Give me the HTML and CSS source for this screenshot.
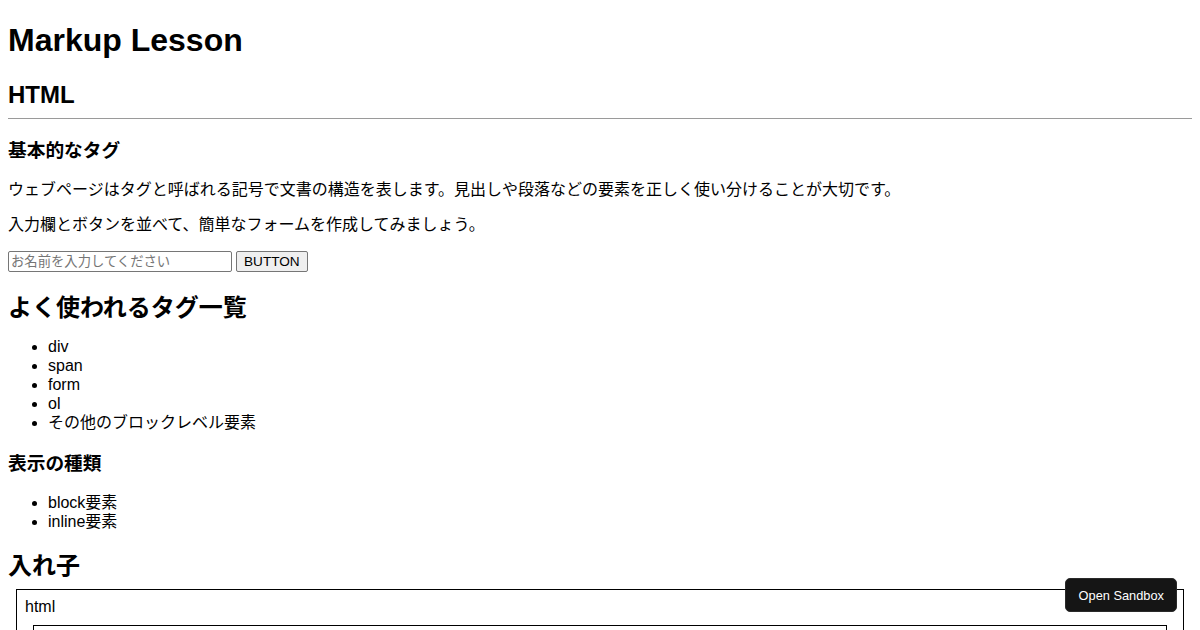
FILE: index.html
```html
<!DOCTYPE html>
<html lang="ja">
<head>
<meta charset="utf-8">
<title>Markup Lesson</title>
<link rel="stylesheet" href="styles.css">
</head>
<body>
<h1 class="page-title">Markup Lesson</h1>
<h2 class="section-title">HTML</h2>
<h3 class="sub-first">基本的なタグ</h3>
<p class="lead">ウェブページはタグと呼ばれる記号で文書の構造を表します。見出しや段落などの要素を正しく使い分けることが大切です。</p>
<p class="text">入力欄とボタンを並べて、簡単なフォームを作成してみましょう。</p>
<form class="demo-form">
  <input class="text-input" type="text" placeholder="お名前を入力してください">
  <button class="btn" type="button">BUTTON</button>
</form>
<h2 class="heading-tags">よく使われるタグ一覧</h2>
<ul class="list list-tags">
  <li>div</li>
  <li>span</li>
  <li>form</li>
  <li>ol</li>
  <li>その他のブロックレベル要素</li>
</ul>
<h3 class="sub-second">表示の種類</h3>
<ul class="list list-kinds">
  <li>block要素</li>
  <li>inline要素</li>
</ul>
<h2 class="heading-nest">入れ子</h2>
<div class="box box-outer">
  <div class="box-label">html</div>
  <div class="box">
    <div class="box-label">body</div>
    <div class="box">
      <div class="box-label">div</div>
    </div>
  </div>
</div>
<a class="open-sandbox" href="#">Open Sandbox</a>
</body>
</html>
```

FILE: styles.css
```css
html, body {
  margin: 0;
  padding: 0;
}

body {
  padding: 0 8px;
  font-family: "Liberation Sans", "Noto Sans CJK JP", sans-serif;
  font-size: 16px;
  line-height: 18.4px;
  color: #000;
  background: #fff;
}

h1, h2, h3, p, ul, form {
  margin: 0;
}

.page-title {
  margin-top: 21.5px;
  font-size: 32px;
  line-height: 37px;
}

h2 {
  font-size: 24px;
  line-height: 27.6px;
}

h3 {
  font-size: 18.72px;
  line-height: 21.5px;
}

.section-title {
  margin-top: 22.5px;
  padding-bottom: 9px;
  border-bottom: 1px solid #9a9a9a;
}

.sub-first { margin-top: 21.5px; }
.lead { margin-top: 19.5px; }
.text { margin-top: 16px; }

.demo-form {
  display: flex;
  align-items: center;
  gap: 4px;
  margin-top: 16.6px;
}

.text-input {
  width: 224px;
  height: 21.5px;
  box-sizing: border-box;
  margin: 0;
  padding: 1px 2px;
  border: 1px solid #767676;
  border-radius: 2px;
  font-family: "Liberation Sans", "Noto Sans CJK JP", sans-serif;
  font-size: 13.333px;
}

.text-input::placeholder {
  color: #757575;
}

.btn {
  height: 21.5px;
  margin: 0;
  padding: 1px 7px;
  border: 1px solid #767676;
  border-radius: 2px;
  background: #efefef;
  color: #000;
  font-family: "Liberation Sans", sans-serif;
  font-size: 13.6px;
}

.heading-tags { margin-top: 21.7px; }

.list {
  padding-left: 40px;
}

.list li {
  line-height: 19px;
}

.list-tags { margin-top: 15.7px; }
.sub-second { margin-top: 20.75px; }
.list-kinds { margin-top: 18.75px; }
.heading-nest { margin-top: 20.7px; }

.box {
  border: 1px solid #000;
  margin: 8px;
  padding: 8px;
}

.box-outer {
  margin-top: 10.2px;
}

.open-sandbox {
  position: fixed;
  right: 23px;
  bottom: 18px;
  height: 34px;
  line-height: 34px;
  padding: 0 12px 0 13px;
  background: #151515;
  color: #fff;
  font-family: "Liberation Sans", sans-serif;
  font-size: 12.8px;
  text-decoration: none;
  border-radius: 5px;
  border: 1px solid #2a2a2a;
  box-sizing: border-box;
}
```
